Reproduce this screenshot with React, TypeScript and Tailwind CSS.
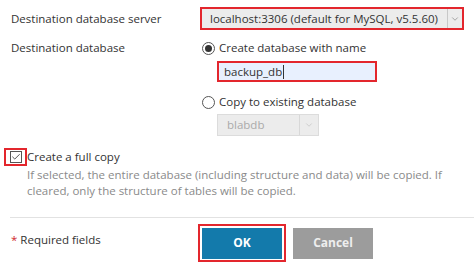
import { ChevronDown, Check } from "lucide-react";

function Radio({ checked }: { checked?: boolean }) {
  return (
    <span className="flex h-[13px] w-[13px] shrink-0 items-center justify-center rounded-full border border-[#555] bg-white">
      {checked && <span className="h-[7px] w-[7px] rounded-full bg-[#333]" />}
    </span>
  );
}

export default function App() {
  return (
    <div className="h-[269px] w-[474px] overflow-hidden bg-white text-[11.5px] text-[#333]" style={{ fontFamily: '"Open Sans", sans-serif' }}>
      <div className="pt-[7px]">
        {/* Server */}
        <div className="flex items-center">
          <div className="w-[200px] pl-[11px]">Destination database server</div>
          <div className="flex h-[23px] w-[264px] items-center border-2 border-[#e3262d] bg-[#ececec]">
            <span className="flex-1 truncate pl-[8px]">localhost:3306 (default for MySQL, v5.5.60)</span>
            <span className="flex h-full w-[15px] items-center justify-center border-l border-[#c8c8c8] text-[#777]">
              <ChevronDown size={10} strokeWidth={1.5} />
            </span>
          </div>
        </div>

        {/* Destination database */}
        <div className="mt-[8px] flex">
          <div className="w-[202px] pl-[11px] leading-[20px]">Destination database</div>
          <div className="flex flex-col">
            <div className="flex h-[20px] items-center gap-[4px]">
              <Radio checked />
              <span>Create database with name</span>
            </div>
            <div className="ml-[15px] mt-[3px] flex h-[21px] w-[160px] items-center border-2 border-[#e3262d] bg-[#e8f0fe] pl-[5px]">
              backup_db<span className="ml-[1px] h-[14px] w-px bg-[#333]" />
            </div>
            <div className="mt-[10px] flex h-[20px] items-center gap-[4px]">
              <Radio />
              <span>Copy to existing database</span>
            </div>
            <div className="ml-[15px] mt-[2px] flex h-[22px] w-[102px] items-center border border-[#dcdcdc] bg-[#ececec] text-[#aaa]">
              <span className="flex-1 pl-[9px]">blabdb</span>
              <span className="flex h-full w-[19px] items-center justify-center border-l border-[#d8d8d8] text-[#bbb]">
                <ChevronDown size={10} strokeWidth={1.5} />
              </span>
            </div>
          </div>
        </div>

        {/* Full copy */}
        <div className="mt-[12px] flex">
          <div className="ml-[4px] flex h-[18px] w-[23px] shrink-0 items-center justify-center border-2 border-[#e3262d]">
            <span className="flex h-[12px] w-[12px] items-center justify-center border border-[#555] bg-white text-[#333]">
              <Check size={10} strokeWidth={2} />
            </span>
          </div>
          <div>
            <div className="leading-[18px]">Create a full copy</div>
            <div className="mt-[1px] pr-[24px] leading-[16px] text-[#8a8a8a]">
              If selected, the entire database (including structure and data) will be copied. If cleared, only the structure of tables will be copied.
            </div>
          </div>
        </div>

        {/* Separator */}
        <div className="ml-[10px] mt-[18px] h-px bg-[#e2e2e2]" />

        {/* Footer */}
        <div className="mt-[6px] flex items-center">
          <div className="w-[198px] pl-[11px] pb-[6px]">
            <span className="text-[#d0272d]">*</span> Required fields
          </div>
          <div className="flex h-[38px] w-[88px] items-center justify-center border-2 border-[#e3262d]">
            <button className="h-[31px] w-[80px] bg-[#137aab] text-[12px] font-bold text-white">OK</button>
          </div>
          <button className="ml-[7px] h-[31px] w-[80px] bg-[#9c9c9c] text-[12px] font-bold text-[#eeeeee]">Cancel</button>
        </div>
      </div>
    </div>
  );
}
